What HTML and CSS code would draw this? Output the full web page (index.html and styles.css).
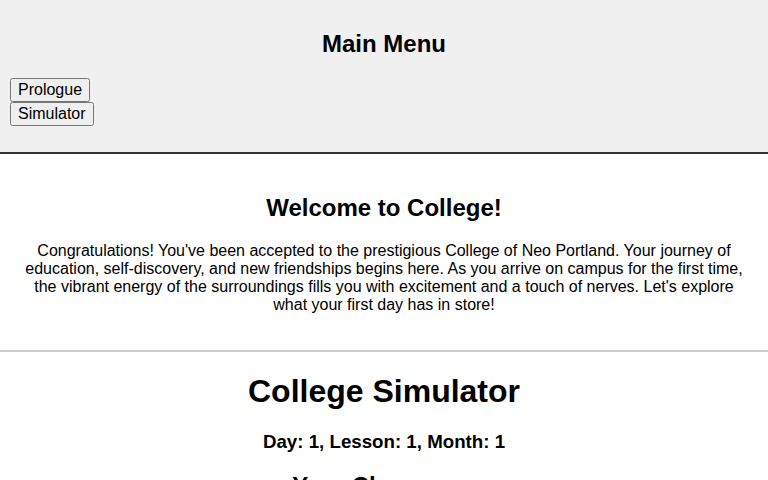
FILE: index.html
```html
<!DOCTYPE html>
<html lang="en">
<head>
    <meta charset="UTF-8">
    <meta name="viewport" content="width=device-width, initial-scale=1.0">
    <title>College Simulator</title>
    <link rel="stylesheet" href="styles.css">
</head>
<body>
    <header class="menu">
        <h2>Main Menu</h2>
        <nav class="menu-buttons">
            <button class="menu-btn" data-target="prologue">Prologue</button>
            <button class="menu-btn" data-target="simulator">Simulator</button>
        </nav>
    </header>

    <section class="prologue" id="prologue">
        <h2>Welcome to College!</h2>
        <p>Congratulations! You've been accepted to the prestigious College of Neo Portland. Your journey of education, self-discovery, and new friendships begins here. As you arrive on campus for the first time, the vibrant energy of the surroundings fills you with excitement and a touch of nerves. Let's explore what your first day has in store!</p>
    </section>

    <section class="simulator" id="simulator">
        <h1>College Simulator</h1>
        <h3 class="date">Day: 1, Lesson: 1, Month: 1</h3>
        <h2>Your Classroom</h2>
    </section>
</body>
</html>
```

FILE: styles.css
```css
* {
    box-sizing: border-box;
}

body {
    margin: 0;
    font-family: "Liberation Sans", Arial, sans-serif;
    color: #000;
    background: #fff;
}

.menu {
    background-color: #f0f0f0;
    padding: 10px 10px 26px;
    border-bottom: 2px solid #333;
}

.menu h2 {
    text-align: center;
    font-size: 24px;
    margin: 20px 0;
}

.menu-btn {
    display: block;
    font-family: "Liberation Sans", Arial, sans-serif;
    font-size: 16px;
    color: #000;
}

.prologue {
    padding: 20px;
    text-align: center;
    border-bottom: 2px solid #ccc;
}

.prologue h2 {
    font-size: 24px;
    margin: 20px 0;
}

.prologue p {
    font-size: 16px;
    margin: 16px 0;
}

.simulator {
    padding: 0 20px;
    text-align: center;
}

.simulator h1 {
    font-size: 32px;
    margin: 21px 0;
}

.date {
    font-size: 18.72px;
    margin: 19px 0;
}

.simulator h2 {
    font-size: 24px;
    margin: 17px 0;
}
```
